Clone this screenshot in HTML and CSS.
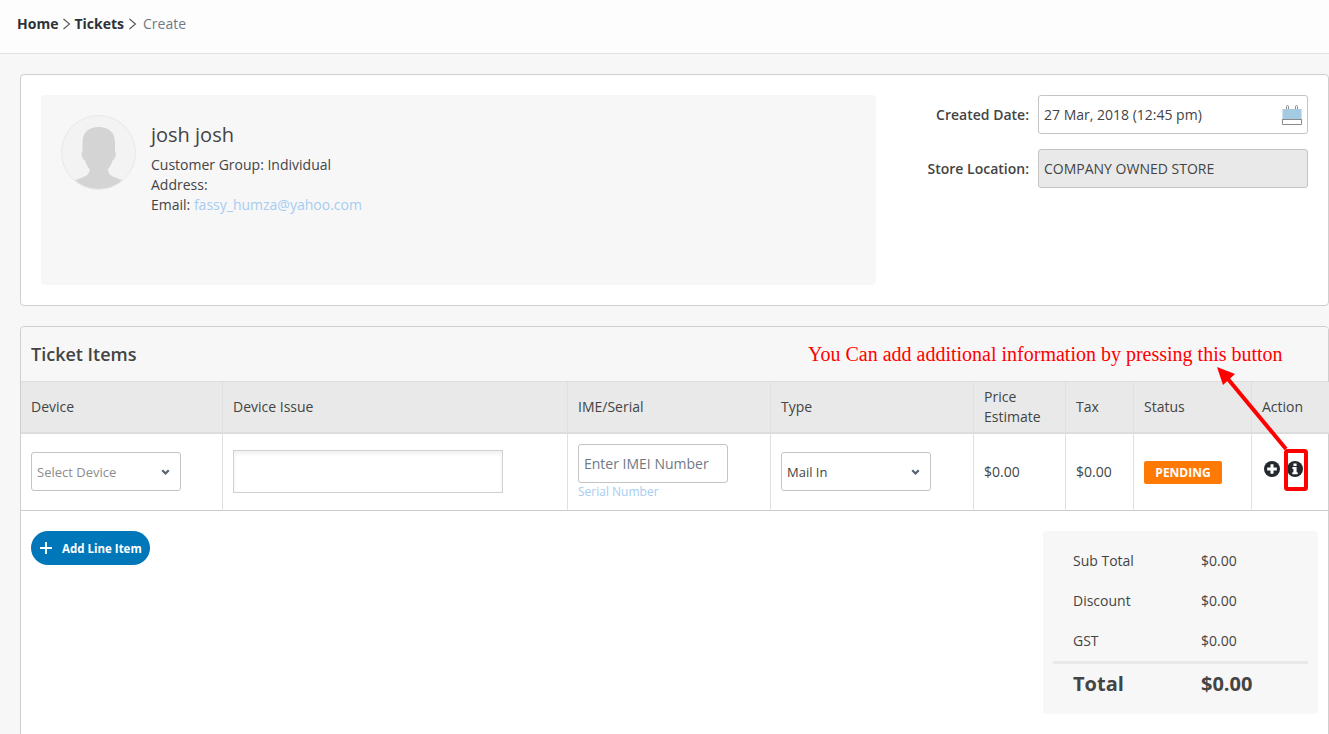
FILE: index.html
```html
<!DOCTYPE html>
<html lang="en">
<head>
    <meta charset="UTF-8">
    <meta name="viewport" content="width=device-width, initial-scale=1.0">
    <link rel="stylesheet" href="styles.css">
    <title>Create Ticket</title>
</head>
<body>
    <nav class="crumbs">
        <a class="crumb-link">Home</a>
        <svg class="crumb-sep" viewBox="0 0 9 12"><path d="M1.5 1l6 5-6 5" /></svg>
        <a class="crumb-link">Tickets</a>
        <svg class="crumb-sep crumb-sep-last" viewBox="0 0 9 12"><path d="M1.5 1l6 5-6 5" /></svg>
        <span class="crumb-current">Create</span>
    </nav>

    <main class="page">
        <section class="card customer-card">
            <div class="customer">
                <svg class="avatar" viewBox="0 0 75 75">
                    <defs>
                        <clipPath id="avatarClip"><circle cx="37.5" cy="37.5" r="36.5" /></clipPath>
                    </defs>
                    <circle cx="37.5" cy="37.5" r="37" class="avatar-bg" />
                    <path class="avatar-man" clip-path="url(#avatarClip)" d="M37.500 12c-9.500 0-16 5.500-16 15v9c0 1-.9 1.200-.9 2.500 0 3 1.200 6 3.400 7 .9 3.500 2.600 6.500 4.500 8.500 0 4-1.500 6-6 8-5 2-7.500 2.500-10.500 4.500 7 4.500 15 8 25.500 8s19-3.500 26-8c-3-2-5.500-2.500-10.500-4.500-4.500-2-6-4-6-8 1.900-2 3.600-5 4.500-8.500 2.200-1 3.400-4 3.400-7 0-1.300-.9-1.500-.9-2.500v-9c0-9.500-6.500-15-16-15z" />
                </svg>
                <div class="customer-info">
                    <h2 class="customer-name">josh josh</h2>
                    <p>Customer Group: Individual</p>
                    <p>Address:</p>
                    <p>Email: <a class="mail">fassy_humza@yahoo.com</a></p>
                </div>
            </div>
            <div class="ticket-meta">
                <div class="meta-row">
                    <label class="meta-label">Created Date:</label>
                    <div class="meta-field">
                        <span>27 Mar, 2018 (12:45 pm)</span>
                        <svg class="calendar" viewBox="0 0 20 20">
                            <path class="cal-top" d="M.5 4h19v10H.5z" />
                            <path class="cal-body" d="M.5 14.500h19M.5 14v5.500h19V14" />
                            <path class="cal-ring" d="M4.500 4V1.500q0-1 1-1t1 1V4M13.500 4V1.500q0-1 1-1t1 1V4" />
                        </svg>
                    </div>
                </div>
                <div class="meta-row">
                    <label class="meta-label">Store Location:</label>
                    <div class="meta-field meta-disabled">COMPANY OWNED STORE</div>
                </div>
            </div>
        </section>

        <section class="card items-card">
            <h3 class="items-title">Ticket Items</h3>
            <table class="items">
                <thead>
                    <tr>
                        <th class="col-device">Device</th>
                        <th class="col-issue">Device Issue</th>
                        <th class="col-imei">IME/Serial</th>
                        <th class="col-type">Type</th>
                        <th class="col-price">Price Estimate</th>
                        <th class="col-tax">Tax</th>
                        <th class="col-status">Status</th>
                        <th class="col-action">Action</th>
                    </tr>
                </thead>
                <tbody>
                    <tr>
                        <td>
                            <div class="select select-empty">Select Device
                                <svg class="chevron" viewBox="0 0 10 7"><path d="M1.200 1.500L5 5.200l3.800-3.700" /></svg>
                            </div>
                        </td>
                        <td><div class="issue-input"></div></td>
                        <td class="imei-cell">
                            <div class="imei-input">Enter IMEI Number</div>
                            <a class="serial-link">Serial Number</a>
                        </td>
                        <td>
                            <div class="select">Mail In
                                <svg class="chevron" viewBox="0 0 10 7"><path d="M1.200 1.500L5 5.200l3.800-3.700" /></svg>
                            </div>
                        </td>
                        <td>$0.00</td>
                        <td>$0.00</td>
                        <td><span class="badge">PENDING</span></td>
                        <td>
                            <div class="actions">
                                <svg class="action-icon" viewBox="0 0 16 16">
                                    <circle cx="8" cy="8" r="8" />
                                    <path class="action-glyph" d="M6.500 3.200h3v3.300h3.300v3h-3.300v3.300h-3V9.500H3.200v-3h3.300z" />
                                </svg>
                                <svg class="action-icon" viewBox="0 0 16 16">
                                    <circle cx="8" cy="8" r="8" />
                                    <path class="action-glyph" d="M6.400 2.400h3.200v2.700H6.400zM5.400 6h4.200v5.200h1.100v2H5.300v-2h1.100V8h-1z" />
                                </svg>
                            </div>
                        </td>
                    </tr>
                </tbody>
            </table>
            <div class="items-foot">
                <button class="add-btn">
                    <svg class="add-plus" viewBox="0 0 12 12"><path d="M6 0v12M0 6h12" /></svg>
                    Add Line Item
                </button>
                <div class="totals">
                    <div class="total-row"><span>Sub Total</span><span>$0.00</span></div>
                    <div class="total-row"><span>Discount</span><span>$0.00</span></div>
                    <div class="total-row"><span>GST</span><span>$0.00</span></div>
                    <div class="total-row total-grand"><span>Total</span><span>$0.00</span></div>
                </div>
            </div>
        </section>
    </main>

    <!-- red annotation drawn over the screenshot -->
    <div class="note">You Can add additional information by pressing this button</div>
    <svg class="note-marks" viewBox="0 0 1329 734">
        <path class="note-line" d="M1286 449L1228 379" />
        <path class="note-head" d="M1217 367l18 7-12 11z" />
        <rect class="note-box" x="1286" y="451" width="20" height="38" rx="1.500" />
    </svg>
</body>
</html>
```

FILE: styles.css
```css
* {
    box-sizing: border-box;
}
html, body {
    height: 734px;
    overflow: hidden;
}
body {
    margin: 0;
    background-color: #f7f7f7;
    color: #444;
    font-family: "Open Sans", "Liberation Sans", sans-serif;
    font-size: 14px;
    line-height: 20px;
}

/* breadcrumb */
.crumbs {
    display: flex;
    align-items: center;
    height: 54px;
    padding: 0 0 6px 17px;
    background-color: #fdfdfd;
    border-bottom: 1px solid #e2e2e2;
}
.crumb-link {
    font-weight: 700;
    color: #2d3238;
}
.crumb-sep {
    width: 9px;
    height: 12px;
    margin: 0 3px 0 4px;
    fill: none;
    stroke: #555;
    stroke-width: 1.100;
}
.crumb-sep-last {
    margin: 0 6px 0 4px;
}
.crumb-current {
    color: #6f7a85;
}

/* cards */
.page {
    padding: 20px 0 0 20px;
}
.card {
    width: 1309px;
    background-color: #fff;
    border: 1px solid #cfcfcf;
    border-radius: 4px;
}
.customer-card {
    display: flex;
    justify-content: space-between;
    height: 232px;
    padding: 20px;
}
.customer {
    display: flex;
    gap: 15px;
    width: 835px;
    height: 190px;
    padding: 20px;
    background-color: #f7f7f7;
    border-radius: 4px;
}
.avatar {
    flex: none;
    width: 75px;
    height: 75px;
}
.avatar-bg {
    fill: #f3f3f3;
    stroke: #e8e8e8;
    stroke-width: 1;
}
.avatar-man {
    fill: #d4d4d4;
}
.customer-name {
    margin: 6px 0 6px;
    font-size: 20px;
    font-weight: 400;
    line-height: 28px;
    color: #444;
}
.customer-info p {
    margin: 0;
}
.mail {
    color: #a6cdf2;
}

.ticket-meta {
    display: flex;
    flex-direction: column;
    gap: 15px;
    width: 400px;
}
.meta-row {
    display: flex;
    align-items: center;
    justify-content: flex-end;
    gap: 9px;
}
.meta-label {
    font-weight: 600;
    white-space: nowrap;
}
.meta-field {
    display: flex;
    align-items: center;
    justify-content: space-between;
    width: 270px;
    height: 39px;
    padding: 0 5px;
    background-color: #fff;
    border: 1px solid #c4c4c4;
    border-radius: 3px;
}
.meta-disabled {
    background-color: #e9e9e9;
}
.calendar {
    width: 20px;
    height: 20px;
    fill: none;
}
.cal-top {
    fill: #a5cbe3;
}
.cal-body {
    stroke: #8a8a8a;
}
.cal-ring {
    stroke: #8a8a8a;
}

/* ticket items */
.items-card {
    height: 440px;
    margin-top: 20px;
}
.items-title {
    display: flex;
    align-items: center;
    height: 55px;
    margin: 0;
    padding: 0 0 0 10px;
    font-size: 18px;
    font-weight: 600;
    background-color: #f7f7f7;
    border-bottom: 1px solid #ddd;
    border-radius: 4px 4px 0 0;
}
.items {
    width: 100%;
    table-layout: fixed;
    border-collapse: separate;
    border-spacing: 0;
}
.items th, .items td {
    padding: 0 10px;
    text-align: left;
    border-right: 1px solid #e0e0e0;
}
.items th:last-child, .items td:last-child {
    border-right: 0;
}
.items th {
    height: 52px;
    font-weight: 400;
    color: #444;
    background-color: #e9e9e9;
    border-bottom: 2px solid #ddd;
}
.items td {
    height: 77px;
    border-bottom: 1px solid #ccc;
}
.col-device { width: 202px; }
.col-issue { width: 345px; }
.col-imei { width: 203px; }
.col-type { width: 203px; }
.col-price { width: 92px; }
.col-tax { width: 68px; }
.col-status { width: 118px; }
.col-action { width: 77px; }

.select {
    display: flex;
    align-items: center;
    justify-content: space-between;
    width: 150px;
    height: 39px;
    margin-top: -2px;
    padding: 2px 10px 0 5px;
    font-size: 13px;
    background-color: #fff;
    border: 1px solid #c4c4c4;
    border-radius: 3px;
}
.select-empty {
    color: #8c8c8c;
}
.chevron {
    width: 9px;
    height: 6px;
    fill: none;
    stroke: #566270;
    stroke-width: 2.600;
}
.issue-input {
    width: 270px;
    height: 43px;
    margin-top: -2px;
    background-color: #fff;
    border: 1px solid #d0d0d0;
    box-shadow: inset 0 3px 4px rgba(0, 0, 0, 0.06);
}
.items td.imei-cell {
    vertical-align: top;
    padding-top: 10px;
}
.imei-input {
    display: flex;
    align-items: center;
    width: 150px;
    height: 39px;
    padding: 0 5px;
    color: #6f7a85;
    border: 1px solid #c4c4c4;
    border-radius: 3px;
}
.serial-link {
    display: block;
    font-size: 12px;
    line-height: 18px;
    color: #a6cdf2;
}
.badge {
    display: block;
    width: 78px;
    height: 23px;
    font-size: 12px;
    font-weight: 700;
    line-height: 23px;
    text-align: center;
    color: #fff;
    background-color: #ff7a05;
    border-radius: 2px;
}
.actions {
    display: flex;
    gap: 7px;
    margin: -6px 0 0 2px;
}
.action-icon {
    width: 16px;
    height: 16px;
    fill: #23282e;
}
.action-glyph {
    fill: #fff;
}

.items-foot {
    display: flex;
    justify-content: space-between;
    align-items: flex-start;
    padding: 20px 10px 0;
}
.add-btn {
    display: flex;
    align-items: center;
    gap: 10px;
    width: 119px;
    height: 34px;
    padding: 0 0 0 9px;
    font-family: inherit;
    font-size: 11.500px;
    font-weight: 700;
    color: #fff;
    background-color: #0077b8;
    border: 0;
    border-radius: 17px;
}
.add-plus {
    width: 12px;
    height: 12px;
    fill: none;
    stroke: #fff;
    stroke-width: 1.800;
}
.totals {
    width: 275px;
    height: 183px;
    padding: 10px 10px 0;
    background-color: #f7f7f7;
    border-radius: 4px;
}
.total-row {
    display: flex;
    align-items: center;
    height: 40px;
    padding-left: 20px;
}
.total-row span:first-child {
    width: 128px;
}
.total-grand {
    height: 43px;
    font-size: 20px;
    font-weight: 700;
    border-top: 3px solid #e9e9e9;
}

/* annotation */
.note {
    position: absolute;
    top: 342px;
    left: 808px;
    font-family: "Liberation Serif", serif;
    font-size: 20px;
    line-height: 24px;
    color: #f00;
    white-space: nowrap;
}
.note-marks {
    position: absolute;
    top: 0;
    left: 0;
    width: 1329px;
    height: 734px;
    pointer-events: none;
}
.note-line {
    stroke: #f00;
    stroke-width: 4;
    fill: none;
}
.note-head {
    fill: #f00;
}
.note-box {
    fill: none;
    stroke: #f00;
    stroke-width: 4;
}
```
